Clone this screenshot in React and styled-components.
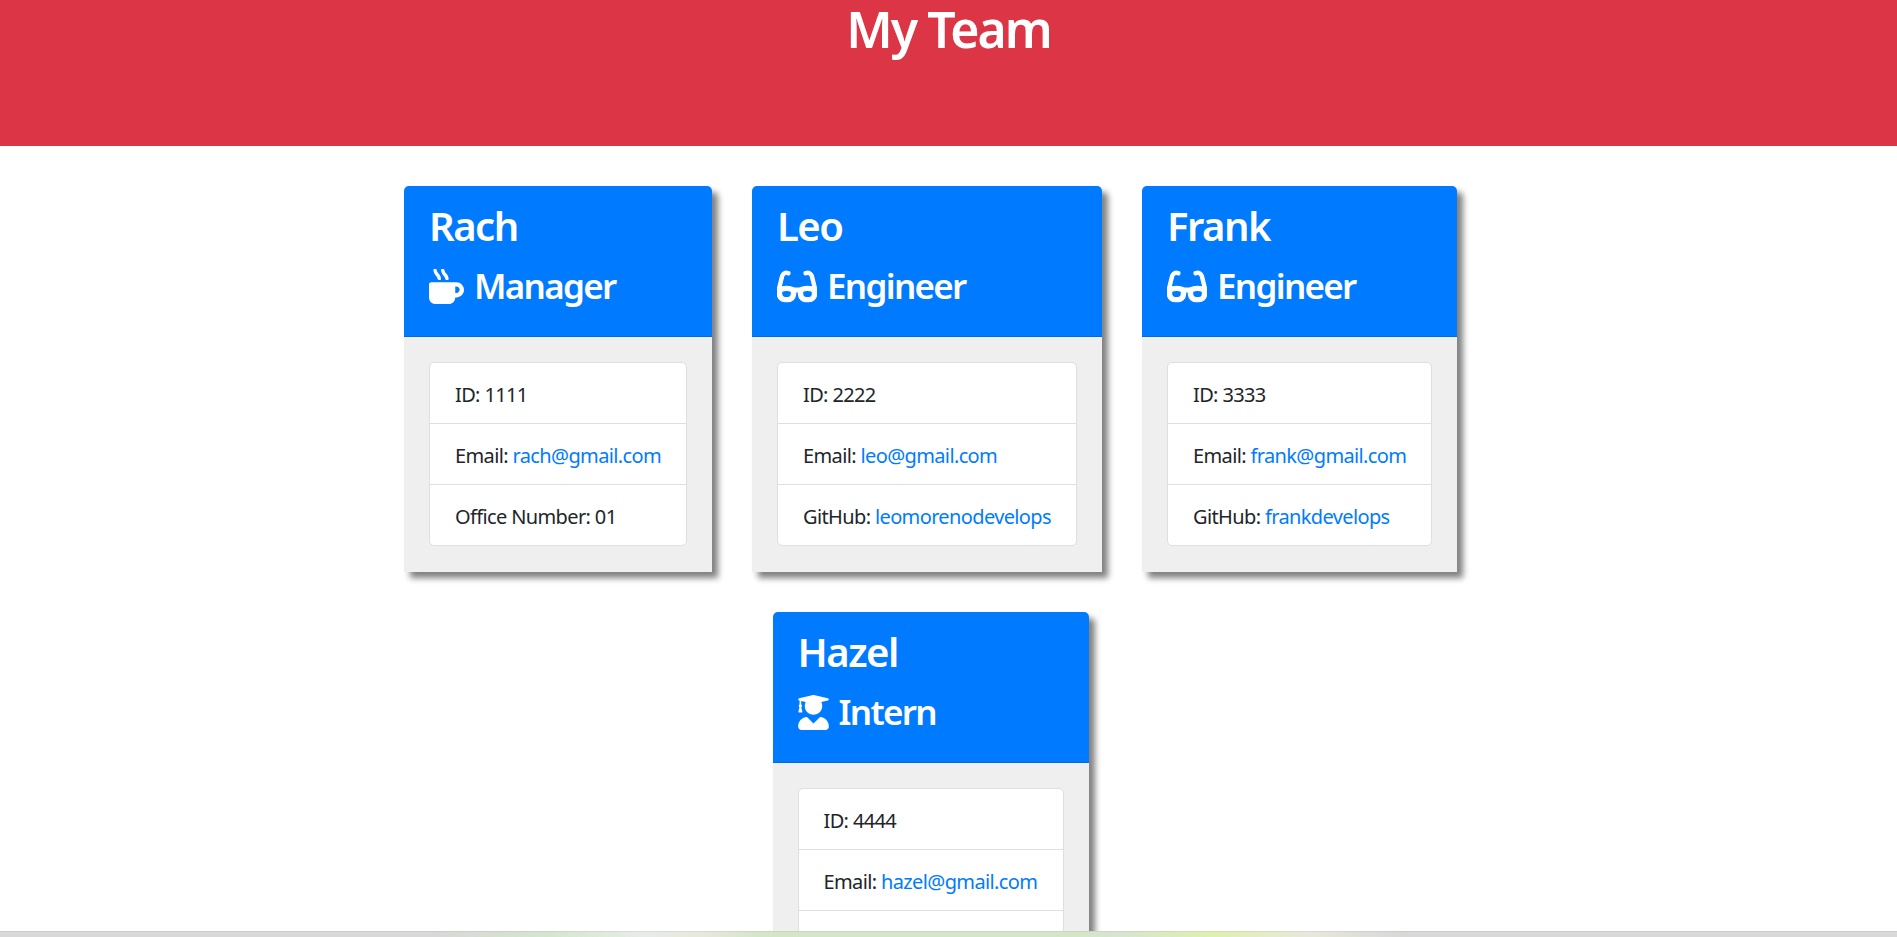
import React from "react";
import styled, { createGlobalStyle } from "styled-components";
import { FaMugHot, FaGlasses, FaUserGraduate } from "react-icons/fa";

const GlobalStyle = createGlobalStyle`
  html, body {
    margin: 0;
    height: 100%;
    overflow: hidden;
    background: #fff;
  }
  * { box-sizing: border-box; }
  body {
    font-family: "Noto Sans", "Open Sans", sans-serif;
    font-size: 20px;
    line-height: 30px;
    color: #212529;
  }
`;

const Header = styled.header`
  height: 146px;
  background-color: #dc3545;
  color: #fff;
  text-align: center;
`;

const Heading = styled.h1`
  margin: 0;
  font-size: 50px;
  line-height: 58px;
  font-weight: 600;
  letter-spacing: -2px;
`;

const Main = styled.main`
  padding-top: 20px;
  padding-right: 36px;
`;

const Row = styled.div`
  display: flex;
  flex-wrap: wrap;
  justify-content: center;
  width: 1200px;
  margin: 0 auto;
`;

const Card = styled.section`
  width: ${(props) => props.$width}px;
  margin: 20px;
  border-radius: 5px 5px 0 0;
  box-shadow: 6px 6px 6px #808080;
  background-color: #efefef;
`;

const CardHead = styled.div`
  height: 151px;
  padding: 16px 25px 0;
  background-color: #007bff;
  border-bottom: 1px solid rgba(0, 0, 0, 0.125);
  border-radius: 5px 5px 0 0;
  color: #fff;
`;

const Name = styled.h2`
  margin: 0 0 15px;
  font-size: 40px;
  line-height: 48px;
  font-weight: 600;
  letter-spacing: -1.5px;
`;

const Role = styled.h3`
  display: flex;
  align-items: center;
  gap: 10px;
  margin: 0;
  font-size: 35px;
  line-height: 42px;
  font-weight: 600;
  letter-spacing: -1.7px;
`;

const RoleIcon = styled.span`
  display: block;
  flex: none;
  width: ${(props) => props.$width}px;
  height: 35px;
  svg {
    display: block;
    width: 100%;
    height: 100%;
    stroke-width: ${(props) => props.$stroke || 0};
  }
`;

const CardBody = styled.div`
  padding: 25px 25px 26px;
`;

const List = styled.ul`
  margin: 0;
  padding: 0;
  list-style: none;
  background-color: #fff;
  border: 1px solid #dfdfdf;
  border-radius: 5px;
`;

const Item = styled.li`
  height: 60px;
  padding: 17px 25px 0;
  white-space: nowrap;
  letter-spacing: -0.63px;
  & + & {
    height: 61px;
    border-top: 1px solid #dfdfdf;
  }
`;

const MailLink = styled.a`
  color: #007bff;
  text-decoration: none;
`;

const Loader = styled.div`
  position: fixed;
  left: 0;
  right: 0;
  bottom: 0;
  height: 6px;
  border-top: 1px solid rgba(0, 0, 0, 0.06);
  background: linear-gradient(
    90deg,
    #d8d8d8 0 23%,
    #d5e6cd 29%,
    #e8ece8 34%,
    #e8e8dc 37%,
    #d5e6c8 40%,
    #d5e6c8 57%,
    #d8e4d0 59%,
    #dff0b0 64%,
    #e8e8dc 69%,
    #d8d8d8 74%
  );
`;

const team = [
  { name: "Rach", role: "Manager", icon: <FaMugHot />, iconWidth: 35, width: 308, id: 1111, email: "rach@gmail.com", label: "Office Number: 01" },
  { name: "Leo", role: "Engineer", icon: <FaGlasses />, iconWidth: 40, iconStroke: 16, width: 350, id: 2222, email: "leo@gmail.com", github: "leomorenodevelops" },
  { name: "Frank", role: "Engineer", icon: <FaGlasses />, iconWidth: 40, iconStroke: 16, width: 315, id: 3333, email: "frank@gmail.com", github: "frankdevelops" },
  { name: "Hazel", role: "Intern", icon: <FaUserGraduate />, iconWidth: 31, width: 316, id: 4444, email: "hazel@gmail.com", label: "School: UCLA" },
];

function Employee({ person }) {
  return (
    <Card $width={person.width}>
      <CardHead>
        <Name>{person.name}</Name>
        <Role>
          <RoleIcon $width={person.iconWidth} $stroke={person.iconStroke}>{person.icon}</RoleIcon>
          {person.role}
        </Role>
      </CardHead>
      <CardBody>
        <List>
          <Item>ID: {person.id}</Item>
          <Item>
            Email: <MailLink href={`mailto:${person.email}`}>{person.email}</MailLink>
          </Item>
          {person.github ? (
            <Item>
              GitHub: <MailLink href={`https://github.com/${person.github}`}>{person.github}</MailLink>
            </Item>
          ) : (
            <Item>{person.label}</Item>
          )}
        </List>
      </CardBody>
    </Card>
  );
}

export default function App() {
  return (
    <>
      <GlobalStyle />
      <Header>
        <Heading>My Team</Heading>
      </Header>
      <Main>
        <Row>
          {team.map((person) => (
            <Employee key={person.id} person={person} />
          ))}
        </Row>
      </Main>
      <Loader />
    </>
  );
}
